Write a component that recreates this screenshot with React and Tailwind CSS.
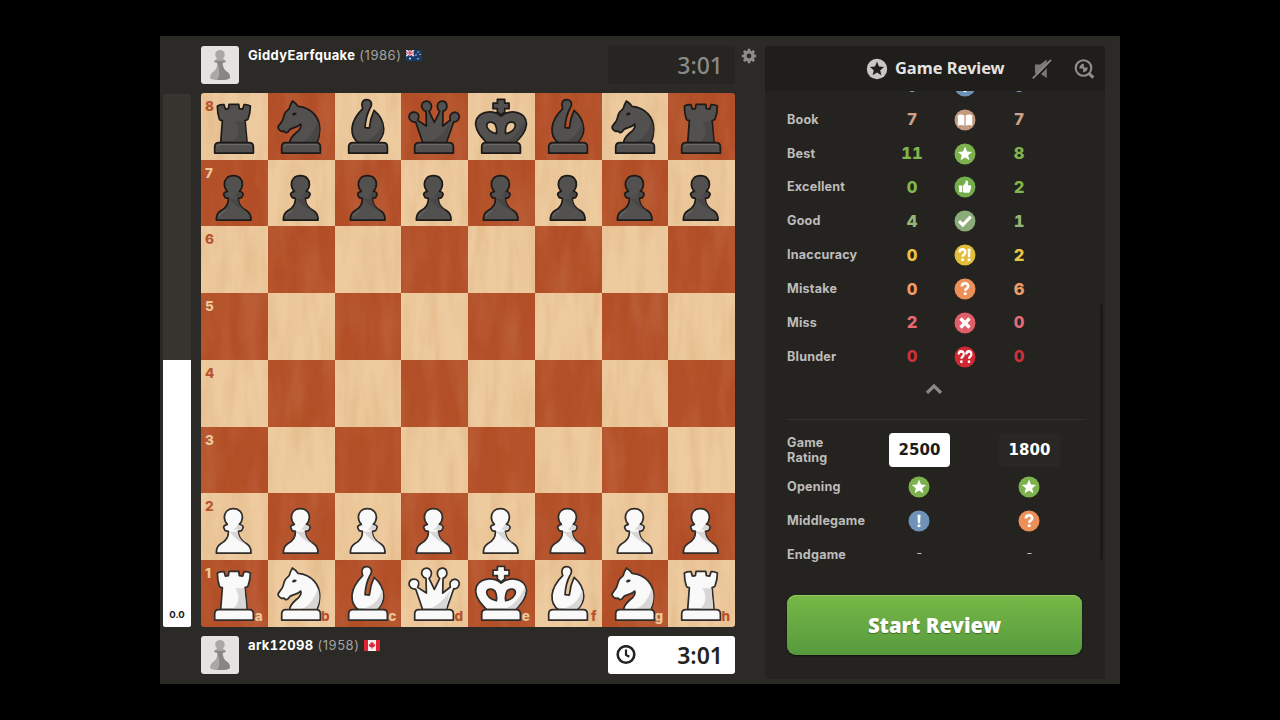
import React from 'react';

const BACK_RANK = ["rook", "knight", "bishop", "queen", "king", "bishop", "knight", "rook"];
const FILES = ["a", "b", "c", "d", "e", "f", "g", "h"];
const RANKS = [8, 7, 6, 5, 4, 3, 2, 1];

const MOVES = [
  { label: "Great", white: 0, black: 0, icon: "great", color: "text-[#749bbf]" },
  { label: "Book", white: 7, black: 7, icon: "book", color: "text-[#cfa08a]" },
  { label: "Best", white: 11, black: 8, icon: "best", color: "text-[#81b64c]" },
  { label: "Excellent", white: 0, black: 2, icon: "excellent", color: "text-[#81b64c]" },
  { label: "Good", white: 4, black: 1, icon: "good", color: "text-[#95b776]" },
  { label: "Inaccuracy", white: 0, black: 2, icon: "inaccuracy", color: "text-[#e8c545]" },
  { label: "Mistake", white: 0, black: 6, icon: "mistake", color: "text-[#f09a66]" },
  { label: "Miss", white: 2, black: 0, icon: "miss", color: "text-[#e56a75]" },
  { label: "Blunder", white: 0, black: 0, icon: "blunder", color: "text-[#cb323a]" },
];

const QUESTION = "M-3.1 -2.6 C-3.1 -6.6 3.2 -6.6 3.2 -2.7 C3.2 -.5 .2 -.6 .2 1.8";

function Question({ x = 0, scale = 1 }) {
  return (
    <g transform={`translate(${x} 0) scale(${scale} 1)`}>
      <path d={QUESTION} fill="none" stroke="#fff" strokeWidth="2.6" />
      <rect x="-1.2" y="3.4" width="2.8" height="2.6" fill="#fff" />
    </g>
  );
}

function Bang({ x = 0 }) {
  return (
    <g fill="#fff" transform={`translate(${x} 0)`}>
      <path d="M-1.5 -6.2 H1.5 L1.1 2.2 H-1.1 Z" />
      <rect x="-1.4" y="3.5" width="2.8" height="2.6" />
    </g>
  );
}

const STAR = "M0 -7.4 L2 -2.5 L7.1 -2.1 L3.2 1.2 L4.4 6.3 L0 3.6 L-4.4 6.3 L-3.2 1.2 L-7.1 -2.1 L-2 -2.5 Z";

const ICON_FILL = {
  great: "#6f93b8",
  book: "#c39a80",
  best: "#7db14e",
  excellent: "#72ae4c",
  good: "#8bab78",
  inaccuracy: "#e2bd3c",
  mistake: "#ec9058",
  miss: "#de5e69",
  blunder: "#cf2a33",
};

function MoveIcon({ type }) {
  return (
    <svg viewBox="-11 -11 22 22" className="block h-[22px] w-[22px]">
      <circle cy=".6" r="10.4" fill="#161512" opacity=".5" />
      <circle r="10.5" fill={ICON_FILL[type]} />
      {type === "great" && <Bang />}
      {type === "book" && (
        <g fill="#fff">
          <path d="M-7.2 -4.8 C-5 -5.9 -2.6 -5.8 -.7 -4.5 V5.7 C-2.6 4.6 -5 4.7 -7.2 5.5 Z" />
          <path d="M7.2 -4.8 C5 -5.9 2.6 -5.8 .7 -4.5 V5.7 C2.6 4.6 5 4.7 7.2 5.5 Z" />
        </g>
      )}
      {type === "best" && <path d={STAR} fill="#fff" />}
      {type === "excellent" && (
        <g fill="#fff">
          <path d="M-6.2 -1.5 H-3 V5.2 H-5.8 Z" />
          <path d="M-2.3 -1.5 C-.2 -2.6 .6 -4 .8 -6.3 C3.2 -6.9 3.6 -4 2.9 -1.8 H5 C6.6 -1.8 6.5 0 5.7 .4 C6.4 1.2 6 2.2 5.3 2.6 C5.8 3.4 5.3 4.2 4.7 4.4 C4.8 5.3 4.2 5.8 3.3 5.8 H.4 C-.8 5.8 -1.6 5.3 -2.3 5 Z" />
        </g>
      )}
      {type === "good" && (
        <path d="M-6 .2 L-2.2 3.9 L5.8 -4.3" fill="none" stroke="#fff" strokeWidth="3.2" />
      )}
      {type === "inaccuracy" && (
        <>
          <Question x={-2.6} scale={0.9} />
          <Bang x={4.1} />
        </>
      )}
      {type === "mistake" && <Question />}
      {type === "miss" && (
        <path d="M-4.5 -4.5 L4.5 4.5 M4.5 -4.5 L-4.5 4.5" stroke="#fff" strokeWidth="3.4" />
      )}
      {type === "blunder" && (
        <>
          <Question x={-3.8} scale={0.82} />
          <Question x={3.8} scale={0.82} />
        </>
      )}
    </svg>
  );
}

// Outlines are drawn on a 200 x 200 square, `shade` is the darker right side
const SHAPES = {
  pawn: {
    body: "M98 46 C116 46 126 58 125 72 C125 82 121 88 116 93 C124 95 128 97 127 103 L123 111 C120 114 116 113 113 114 C112 132 124 144 138 151 C148 157 151 165 151 179 H47 C47 165 50 157 60 151 C74 144 84 132 83 114 C80 113 76 114 73 111 L69 103 C68 97 72 95 80 93 C75 88 71 82 71 72 C71 58 80 46 98 46 Z",
    shade: "M86 115 H112 C112 132 124 144 136 151 C118 148 102 134 86 115 Z M110 95 C122 96 126 98 124 103 L120 109 H98 C104 106 108 101 110 95 Z",
    light: "M54 168 C58 158 66 156 74 150",
  },
  rook: {
    body: "M50 38 Q60 33 70 34 L74 47 L83 46 L85 33 H114 L116 46 L126 47 L130 34 Q140 33 149 38 C149 54 146 66 142 77 Q139 81 133 82 L139 148 H60 L65 82 Q58 81 56 77 C52 66 50 54 50 38 Z",
    shade: "M104 84 H131 L137 146 H96 C116 132 118 104 104 84 Z",
    base: true,
  },
  knight: {
    body: "M74 23 C82 28 88 33 91 39 C132 43 156 72 156 108 C156 126 152 138 147 150 H66 C64 132 84 120 94 110 C100 103 101 98 99 92 C88 104 74 101 66 109 C62 115 60 119 54 118 L49 113 L42 114 C34 110 30 104 32 99 L44 82 C49 72 48 64 54 56 C60 50 66 47 66 42 C67 34 71 30 74 23 Z",
    shade: "M150 82 C160 108 154 132 144 148 H98 C124 138 142 114 150 82 Z",
    base: true,
    eye: true,
  },
  bishop: {
    body: "M96 19 C106 19 112 27 110 36 C109 41 106 44 105 47 C96 64 92 84 91 103 L104 104 C106 82 111 66 118 51 C134 64 146 84 147 106 C147 126 136 140 128 148 H72 C58 140 51 122 52 104 C54 82 66 64 84 46 C78 33 82 19 96 19 Z",
    shade: "M142 88 C150 116 138 138 126 147 H82 C112 138 134 120 142 88 Z",
    base: true,
  },
  queen: {
    body: "M40 56 C50 56 56 64 54 72 C53 77 51 78 51 81 L77 98 L76 54 C64 50 60 39 65 30 C72 20 86 22 91 32 C94 42 90 50 85 54 L101 87 L117 54 C109 48 108 36 113 29 C121 20 135 22 138 34 C140 44 135 51 127 54 L126 98 L149 80 C144 70 150 57 162 56 C172 57 178 66 175 74 C172 82 165 86 159 85 L137 148 H66 L45 86 C33 87 25 79 25 70 C26 62 31 56 40 56 Z",
    shade: "M148 90 L136 147 H84 C110 138 132 116 148 90 Z",
    base: true,
  },
  king: {
    body: "M89 18 H111 V29 H124 V46 H111 V58 H108 C104 60 101 64 100 68 C109 60 124 55 140 56 C164 59 178 74 176 94 C174 116 158 132 143 148 H57 C42 132 26 116 24 94 C23 74 36 59 60 56 C76 55 91 60 100 68 C99 64 96 60 92 58 H89 V46 H76 V29 H89 Z M86 121 C88 111 86 100 82 92 C72 82 58 86 57 96 C57 108 70 118 86 121 Z M114 121 C112 111 114 100 118 92 C128 82 142 86 143 96 C143 108 130 118 114 121 Z",
    shade: "M171 78 C178 104 160 130 142 147 H104 C132 142 160 112 171 78 Z",
    base: true,
  },
};

const BASE = "M42 179 V161 Q42 148 55 148 H145 Q158 148 158 161 V179 Z";

function Piece({ type, side }) {
  const shape = SHAPES[type];
  const dark = side === "black";
  const fill = dark ? "#525150" : "#f9f9f9";
  const shade = dark ? "#494746" : "#d8d7d6";
  const stroke = dark ? "#1d1a18" : "#302d2a";
  return (
    <svg viewBox="1 -1 200 200" className="relative block h-full w-full">
      <path d={shape.body} fill={fill} fillRule="evenodd" stroke={stroke} strokeWidth="5.2" strokeLinejoin="round" />
      <path d={shape.shade} fill={shade} />
      {shape.eye && <path d="M73 62 C76 57 82 56 87 59 C87 65 80 68 74 66 Z" fill={stroke} />}
      {shape.base && <path d={BASE} fill={fill} stroke={stroke} strokeWidth="5.2" strokeLinejoin="round" />}
      {dark && shape.base && (
        <path d="M48 160 Q50 153 58 153 H142 Q149 153 152 158" fill="none" stroke="#6d6b69" strokeWidth="3" />
      )}
      {dark && shape.light && <path d={shape.light} fill="none" stroke="#6d6b69" strokeWidth="3" />}
    </svg>
  );
}

function WoodGrain() {
  return (
    <svg className="pointer-events-none absolute inset-0 h-full w-full">
      <filter id="grain-dark" x="0" y="0" width="100%" height="100%">
        <feTurbulence type="fractalNoise" baseFrequency="0.08 0.014" numOctaves="3" seed="8" />
        <feColorMatrix values="0 0 0 0 .4  0 0 0 0 .08  0 0 0 0 0  2.4 0 0 0 -.9" />
      </filter>
      <filter id="grain-light" x="0" y="0" width="100%" height="100%">
        <feTurbulence type="fractalNoise" baseFrequency="0.05 0.012" numOctaves="3" seed="21" />
        <feColorMatrix values="0 0 0 0 .95  0 0 0 0 .65  0 0 0 0 .4  2.4 0 0 0 -.9" />
      </filter>
      <rect width="100%" height="100%" filter="url(#grain-dark)" opacity=".09" />
      <rect width="100%" height="100%" filter="url(#grain-light)" opacity=".1" />
    </svg>
  );
}

function pieceAt(rank, col) {
  if (rank === 8) return { type: BACK_RANK[col], side: "black" };
  if (rank === 7) return { type: "pawn", side: "black" };
  if (rank === 2) return { type: "pawn", side: "white" };
  if (rank === 1) return { type: BACK_RANK[col], side: "white" };
  return null;
}

function Board() {
  return (
    <div className="relative h-[534px] w-[534px] overflow-hidden rounded-[3px]">
      <div className="grid h-full w-full grid-cols-8 grid-rows-8">
        {RANKS.map((rank, row) =>
          FILES.map((file, col) => (
            <div key={file + rank} className={(row + col) % 2 === 0 ? "bg-[#edcb9f]" : "bg-[#b34f29]"} />
          ))
        )}
      </div>
      <WoodGrain />
      <div className="absolute inset-0 grid grid-cols-8 grid-rows-8 font-[Inter,sans-serif] text-[13.5px] font-extrabold leading-none">
        {RANKS.map((rank, row) =>
          FILES.map((file, col) => {
            const piece = pieceAt(rank, col);
            const color = (row + col) % 2 === 0 ? "text-[#b8532b]" : "text-[#ecc99b]";
            return (
              <div key={file + rank} className={`relative ${color}`}>
                {col === 0 && <span className="absolute left-1 top-[7px]">{rank}</span>}
                {row === 7 && <span className="absolute bottom-[3px] right-[5px]">{file}</span>}
                {piece && <Piece type={piece.type} side={piece.side} />}
              </div>
            );
          })
        )}
      </div>
    </div>
  );
}

function FlagAU() {
  return (
    <svg viewBox="0 0 16 11" className="h-[11px] w-4">
      <rect width="16" height="11" rx="1" fill="#173a66" />
      <path d="M0 0 L8 6 M8 0 L0 6" stroke="#e9dfe4" strokeWidth="1.6" />
      <path d="M4 0 V6 M0 3 H8" stroke="#e9dfe4" strokeWidth="2" />
      <path d="M4 0 V6 M0 3 H8" stroke="#d2354c" strokeWidth="1.1" />
      <g fill="#dfe8f2">
        <circle cx="4" cy="8.6" r="1" />
        <circle cx="12" cy="2" r=".7" />
        <circle cx="10" cy="5" r=".7" />
        <circle cx="14" cy="4.4" r=".7" />
        <circle cx="12" cy="8.8" r=".8" />
      </g>
    </svg>
  );
}

function FlagCA() {
  return (
    <svg viewBox="0 0 16 11" className="h-[11px] w-4">
      <rect width="16" height="11" rx="1" fill="#f5eeee" />
      <path d="M0 0 H4 V11 H0 Z M12 0 H16 V11 H12 Z" fill="#df2236" />
      <path d="M8 1.4 L8.8 3 L9.7 2.6 L9.5 4.6 L11.1 4 L10.8 5.2 L11.4 5.6 L9.5 7.2 L8.3 7.4 V9 H7.7 V7.4 L6.5 7.2 L4.6 5.6 L5.2 5.2 L4.9 4 L6.5 4.6 L6.3 2.6 L7.2 3 Z" fill="#df2236" />
    </svg>
  );
}

function Avatar() {
  return (
    <div className="h-[38px] w-[38px] overflow-hidden rounded-[3px] bg-[#e4e3e1]">
      <svg viewBox="0 0 38 38" className="h-full w-full">
        <path d="M19 4 C22 4 24 6.2 23.7 9 C23.6 10.6 22.7 11.7 21.9 12.5 L24.7 14.8 Q25 16.5 21.6 16.9 C21.8 22 24 24.5 27 26.5 C29 28.5 29.3 31 28.5 32.5 C24 34.6 13.5 34.6 9.3 32.5 C8.6 30 10 27.5 12 26 C15.3 23.5 16.2 21 16.4 16.9 Q12.8 16.5 13.3 14.8 L16.1 12.5 C15.3 11.7 14.4 10.6 14.3 9 C14 6.2 16 4 19 4 Z" fill="#a9a8a6" />
        <path d="M16.4 17 L21.6 16.9 C21.8 22 24 24.5 27 26.5 C29 28.5 29.3 31 28.5 32.5 C25 34.2 20 34.3 16 33.8 C20 29 18 23 16.4 17 Z" fill="#888684" />
        <path d="M13.3 14.8 L24.7 14.8 Q25 16.5 19 17.1 Q12.8 16.5 13.3 14.8 Z" fill="#888684" />
      </svg>
    </div>
  );
}

function Player({ name, rating, flag, children }) {
  return (
    <div className="flex h-[38px] justify-between">
      <div className="flex gap-[9px]">
        <Avatar />
        <div className="flex h-5 items-center gap-1 font-[Inter,sans-serif] text-[13px]">
          <span className="font-bold tabular-nums tracking-[0.35px] text-white">{name}</span>
          <span className="tracking-[0.55px] text-[#a3a29f]">({rating})</span>
          {flag}
        </div>
      </div>
      {children}
    </div>
  );
}

function GearIcon() {
  return (
    <svg viewBox="-8 -8 16 16" className="h-4 w-4">
      <g fill="#8f8e8b">
        {[0, 45, 90, 135].map((angle) => (
          <path key={angle} d="M-1.3 -7.2 H1.3 L1.8 -4 V4 L1.3 7.2 H-1.3 L-1.8 4 V-4 Z" transform={`rotate(${angle})`} />
        ))}
        <circle r="5.2" />
      </g>
      <circle r="2.4" fill="#2b2a26" />
    </svg>
  );
}

function PanelHeader() {
  return (
    <div className="flex h-[45px] shrink-0 items-center bg-[#1f1e1a] pl-[101px] pr-[10px]">
      <svg viewBox="-11 -11 22 22" className="h-[22px] w-[22px]">
        <circle r="10.2" fill="#c8c7c5" />
        <path d={STAR} fill="#1f1e1a" />
      </svg>
      <h1 className="ml-[7px] font-['Noto_Sans',sans-serif] text-[16.4px] font-bold leading-none text-[#e4e3e1]">Game Review</h1>
      <div className="ml-auto flex items-center gap-5">
        <svg viewBox="0 0 22 22" className="h-[22px] w-[22px]">
          <path d="M4 6.5 H9 L15.8 1.5 V20 L9 15.5 H4 Z" fill="#797875" />
          <path d="M3 22 L21.4 3" stroke="#1f1e1a" strokeWidth="2" />
          <path d="M1.8 20.4 L20 1.8" stroke="#8a8986" strokeWidth="1.8" />
        </svg>
        <svg viewBox="0 0 22 22" className="h-[22px] w-[22px]">
          <circle cx="10.5" cy="10" r="7.8" fill="none" stroke="#8f8e8b" strokeWidth="2.1" />
          <path d="M16.1 15.6 L20.3 19.6" stroke="#8f8e8b" strokeWidth="3" />
          <path d="M10.9 10.6 H6.3 A4.4 4.4 0 0 1 10.9 5.8 Z M10.1 9.4 H14.7 A4.4 4.4 0 0 1 10.1 14.2 Z" fill="#8f8e8b" />
        </svg>
      </div>
    </div>
  );
}

function MoveRow({ move }) {
  return (
    <div className="flex h-[33.83px] items-center">
      <span className="w-[100px] pt-px text-[12.6px] font-bold tracking-[0.2px] text-[#bdbcba]">{move.label}</span>
      <div className={`grid grid-cols-[50px_57px_50px] items-center justify-items-center text-[16.5px] font-extrabold leading-none tabular-nums ${move.color}`}>
        <span>{move.white}</span>
        <MoveIcon type={move.icon} />
        <span>{move.black}</span>
      </div>
    </div>
  );
}

function PhaseRow({ label, white, black }) {
  return (
    <div className="flex h-[33.8px] items-center text-[12.6px]">
      <span className="w-[102px] pt-px font-bold tracking-[0.2px] text-[#bdbcba]">{label}</span>
      <div className="flex w-[61px] justify-center text-[#c3c2c0]">{white}</div>
      <div className="ml-[49px] flex w-[61px] justify-center text-[#c3c2c0]">{black}</div>
    </div>
  );
}

function ReviewPanel() {
  return (
    <aside className="mt-[10px] flex h-[633px] w-[340px] flex-col overflow-hidden rounded-[4px] bg-[#252320] font-[Inter,sans-serif]">
      <PanelHeader />
      <div className="flex h-[472px] shrink-0 justify-between overflow-hidden pl-[22px]">
        <div className="-mt-[22px] w-[299px] shrink-0">
          {MOVES.map((move) => (
            <MoveRow key={move.label} move={move} />
          ))}
          <div className="flex h-[45.5px] items-center justify-center">
            <svg viewBox="0 0 18 12" className="mb-[14px] mr-1 h-3 w-[18px]">
              <path d="M2 9.8 L9 3 L16 9.8" fill="none" stroke="#8b8a87" strokeWidth="3.2" />
            </svg>
          </div>
          <div className="border-t border-[#312f2c]" />
          <div className="flex h-[50.5px] items-center pt-[10.5px]">
            <span className="w-[102px] pr-10 text-[12.6px] font-bold leading-[15px] tracking-[0.2px] text-[#bdbcba]">Game Rating</span>
            <span className="flex h-[34px] w-[61px] items-center justify-center rounded-[4px] bg-white font-['DejaVu_Sans',sans-serif] text-[15px] font-bold text-[#1d1c19]">2500</span>
            <span className="ml-[49px] flex h-[34px] w-[61px] items-center justify-center rounded-[4px] bg-[#292724] font-['DejaVu_Sans',sans-serif] text-[15px] font-bold text-white">1800</span>
          </div>
          <PhaseRow label="Opening" white={<MoveIcon type="best" />} black={<MoveIcon type="best" />} />
          <PhaseRow label="Middlegame" white={<MoveIcon type="great" />} black={<MoveIcon type="mistake" />} />
          <PhaseRow label="Endgame" white={<span className="-mt-1">-</span>} black={<span className="-mt-1">-</span>} />
        </div>
        <div className="mr-[2px] mt-[213px] h-[256px] w-[3px] rounded-full bg-[#1b1a17]" />
      </div>
      <button className="ml-[22px] mt-[32px] h-[60px] w-[295px] shrink-0 rounded-[9px] bg-gradient-to-b from-[#77b846] to-[#569a3e] font-['Noto_Sans',sans-serif] text-[20.3px] font-black text-white shadow-[inset_0_1px_0_#93c95f,0_1px_2px_#11100e] [text-shadow:0_1px_1px_rgba(0,0,0,0.35)]">
        Start Review
      </button>
    </aside>
  );
}

export default function App() {
  return (
    <div className="flex h-[720px] w-[1280px] justify-center overflow-hidden bg-black pt-9">
      <main className="flex h-[648px] w-[960px] bg-[#2b2a26]">
        {/* Evaluation bar */}
        <div className="ml-[3px] mt-[57.5px] flex h-[533.5px] w-[28px] flex-col justify-end overflow-hidden rounded-[2px] bg-[#383531]">
          <div className="flex h-[267px] items-end justify-center bg-white pb-[6px] font-[Inter,sans-serif] text-[9.5px] font-bold leading-3 text-[#22201d]">
            0.0
          </div>
        </div>

        <section className="ml-[10px] mt-[9.85px] flex w-[534px] flex-col gap-[9px]">
          <Player name="GiddyEarfquake" rating={1986} flag={<FlagAU />}>
            <div className="flex w-[127px] items-center justify-end rounded-[3px] bg-[#262522] pr-[12px] pt-px font-['Noto_Sans',sans-serif] text-[23px] font-medium text-[#8b8a87]">
              3:01
            </div>
          </Player>
          <Board />
          <Player name="ark12098" rating={1958} flag={<FlagCA />}>
            <div className="flex w-[127px] items-center justify-between rounded-[3px] bg-white pl-2 pr-[12px] pt-px font-['Noto_Sans',sans-serif] text-[23px] font-semibold text-[#262421]">
              <svg viewBox="0 0 20 20" className="h-5 w-5">
                <circle cx="10" cy="9.5" r="8.3" fill="none" stroke="#262421" strokeWidth="2.6" />
                <path d="M10 4.5 V9.9 L13.3 11.7" fill="none" stroke="#262421" strokeWidth="2.2" />
              </svg>
              3:01
            </div>
          </Player>
        </section>

        <div className="ml-[6.4px] mt-[12px] w-[23.6px]">
          <GearIcon />
        </div>

        <ReviewPanel />
      </main>
    </div>
  );
}
